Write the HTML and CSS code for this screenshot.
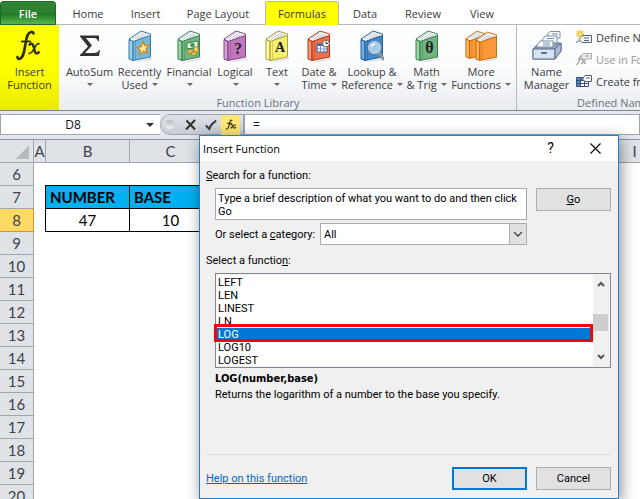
FILE: index.html
```
<!DOCTYPE html>
<html lang="en">
<head>
<meta charset="utf-8">
<title>Spreadsheet</title>
<link rel="stylesheet" href="styles.css">
</head>
<body>
<svg class="defs" aria-hidden="true">
  <symbol id="book" viewBox="0 0 24 32">
    <path d="M3 30.500 L8 31.500 L24 28 V29.500 L10 32Z" fill="#999" opacity=".35"/>
    <path d="M1 9 L13 1 L22.500 4 V7 L6 12Z" fill="#fff" stroke="currentColor" stroke-width="1"/>
    <path d="M4 8.500 L14 2 M6 9.500 L16 3 M9 9.500 L18 4 M12 8.500 L20 5" stroke="#b5bdc9" stroke-width=".8"/>
    <path d="M1 9.500 L5 11.500 V30.500 L1 29Z" class="book-spine" stroke="currentColor"/>
    <path d="M5 11.500 L22.500 5.500 V27 L5 30.500Z" class="book-cover" stroke="currentColor"/>
    <path d="M7.500 11 V30" fill="none" stroke="currentColor" opacity=".5" stroke-width=".8"/>
  </symbol>
</svg>
<div class="app">
  <nav class="tabs">
    <button class="tab tab-file">File</button>
    <button class="tab tab-home">Home</button>
    <button class="tab tab-insert">Insert</button>
    <button class="tab tab-page">Page Layout</button>
    <button class="tab tab-active">Formulas</button>
    <button class="tab tab-data">Data</button>
    <button class="tab tab-review">Review</button>
    <button class="tab tab-view">View</button>
  </nav>

  <div class="ribbon">
    <section class="group library">
      <div class="tools">
        <button class="tool insert-fn">
          <svg class="icon" viewBox="0 0 32 32"><path d="M19.500 3.500 Q19 1.500 17 2 C12.500 3 12.500 9 11.300 15 C10 22 9.500 28 5.500 29 Q3.500 29.200 3.500 27" fill="none" stroke="#2d2d10" stroke-width="2.600" stroke-linecap="round"/><path d="M7 11.500 H17" stroke="#2d2d10" stroke-width="1.800"/><path d="M15 15.500 Q18 11.500 19.500 16 L21 22 Q22.500 25 25.500 21.500" fill="none" stroke="#2d2d10" stroke-width="2.500"/><path d="M25.500 14 Q23 12.500 20.500 18 Q17.500 24 14.500 23.500" fill="none" stroke="#2d2d10" stroke-width="1.600"/></svg>
          <span>Insert<br>Function</span>
        </button>
        <button class="tool w-autosum">
          <svg class="icon" viewBox="0 0 32 32"><path d="M6 5.500 H25 V11 H24 Q23 8 20 8 H12 L18 15.500 L11 23 H20 Q24 23 25 20 H26 L25 26 H6 V25 L14 16.500 L6 6.500Z" fill="#333"/></svg>
          <span>AutoSum<br><i class="caret"></i></span>
        </button>
        <button class="tool w-recent">
          <svg class="icon book blue" viewBox="0 0 24 32"><use href="#book"/><path d="M15 11 L16.800 15.600 L21 15.200 L18 18.800 L19.500 23 L15.500 21.300 L11.500 25 L12.300 20.200 L9 17.500 L13.300 16.700Z" fill="#ffe8a0" stroke="#d88713" stroke-width="1.300"/></svg>
          <span>Recently<br>Used <i class="caret"></i></span>
        </button>
        <button class="tool w-financial">
          <svg class="icon book green" viewBox="0 0 24 32"><use href="#book"/><path d="M10 13 L21 11 V17 L10 19Z" fill="#edf8e8" stroke="#2d7c3c"/><ellipse cx="15.500" cy="15" rx="2.500" ry="2" fill="#3d9550"/><path d="M11 20 h5 v3 h-5Z M17 17 h4 v5 h-4Z M14 22 h5 v3 h-5Z" fill="#f9d65b" stroke="#a8771d" stroke-width=".7"/></svg>
          <span>Financial<br><i class="caret"></i></span>
        </button>
        <button class="tool w-logical">
          <svg class="icon book purple" viewBox="0 0 24 32"><use href="#book"/><text x="15" y="24" class="glyph">?</text></svg>
          <span>Logical<br><i class="caret"></i></span>
        </button>
        <button class="tool w-logical">
          <svg class="icon book yellow" viewBox="0 0 24 32"><use href="#book"/><text x="15" y="22" class="glyph glyph-small">A</text></svg>
          <span>Text<br><i class="caret"></i></span>
        </button>
        <button class="tool w-logical">
          <svg class="icon book red" viewBox="0 0 24 32"><use href="#book"/><path d="M10 14 H20 V22 H10Z" fill="#fff" stroke="#3d5f9d"/><path d="M10 15 H20" stroke="#3d6fb8" stroke-width="2"/><path d="M10 19 H20 M13.500 15 V22 M17 15 V22" stroke="#5c82bd" stroke-width=".8"/><circle cx="19" cy="13.500" r="3.300" fill="#fff" stroke="#555" stroke-width=".8"/><path d="M19 11.500 V13.500 H21" fill="none" stroke="#222"/></svg>
          <span>Date &amp;<br>Time <i class="caret"></i></span>
        </button>
        <button class="tool w-lookup">
          <svg class="icon book navy" viewBox="0 0 24 32"><use href="#book"/><path d="M18 22 L23.500 29" stroke="#8c93a0" stroke-width="3" stroke-linecap="round"/><circle cx="14.500" cy="17.500" r="5.500" fill="#9fcbee" stroke="#c5cbd6" stroke-width="2"/><path d="M11.500 17 Q12 14 15 14" fill="none" stroke="#fff" stroke-width="1.300"/></svg>
          <span>Lookup &amp;<br>Reference <i class="caret"></i></span>
        </button>
        <button class="tool w-math">
          <svg class="icon book green" viewBox="0 0 24 32"><use href="#book"/><text x="14.500" y="23" class="glyph">θ</text></svg>
          <span>Math<br>&amp; Trig <i class="caret"></i></span>
        </button>
        <button class="tool w-lookup">
          <svg class="icon orange" viewBox="0 0 32 32"><use href="#book" x="0" y="0" width="22" height="30"/><use href="#book" x="10" y="1" width="23" height="31"/></svg>
          <span>More<br>Functions <i class="caret"></i></span>
        </button>
      </div>
      <h2 class="group-title">Function Library</h2>
    </section>
    <section class="group names">
      <div class="tools">
        <button class="tool name-manager">
          <svg class="icon" viewBox="0 0 32 32"><path d="M2 19 L8 13 H30 V21 L24 29 H2Z" fill="#8da3c2" stroke="#5d6f8d"/><g fill="#f5f8fc" stroke="#8190a8"><path d="M19 1.500 H29 V8 H19 L16 5Z"/><path d="M14 6 H26 V13 H14 L11 10Z"/></g><path d="M5 17 L9 11 H22 V17 H8Z" fill="#fff" stroke="#7d8da5"/><path d="M12 13 H19 M12 15 H19 M21 4 H27 M16 8.500 H23" stroke="#7990ad"/><path d="M2 19 H24 V29 H2Z" fill="#d7e2f1" stroke="#5d6f8d"/><path d="M24 19 L30 13 V21 L24 29Z" fill="#a9bad3" stroke="#5d6f8d"/><path d="M10 23 H16" stroke="#5d6f8d" stroke-width="2"/></svg>
          <span>Name<br>Manager</span>
        </button>
        <div class="name-tools">
          <button class="row-tool"><svg class="icon-small" viewBox="0 0 16 14"><path d="M6 5.500 H15.500 V12.500 H6 L3 9.500Z" fill="#f5f8fc" stroke="#52647f"/><path d="M8 8 H13 M8 10.500 H13 M0 12.500 L3 10.500" stroke="#52647f"/><path d="M4 0 V8 M0 4 H8 M1 1 L7 7 M7 1 L1 7" stroke="#efbd2c" stroke-width="1.400"/><circle cx="4" cy="4" r="1.500" fill="#fff59b"/></svg>Define Name</button>
          <button class="row-tool off"><svg class="icon-small" viewBox="0 0 16 14"><path d="M7 1.500 H15.500 V7 H7 L5 4.500Z" fill="#eee" stroke="#aaa"/><path d="M9 4 H13 M6 4 Q4 3 3.500 7 Q3 12 0 12.500 M1.500 7 H6 M5 8 Q7 7 8 10 Q8.500 12 10 11 M9.500 8 L5 12" fill="none" stroke="#999" stroke-width="1.200"/></svg>Use in Formula</button>
          <button class="row-tool"><svg class="icon-small" viewBox="0 0 16 14"><path d="M.5 3.500 H12.500 V12.500 H.5Z" fill="#fff" stroke="#35517d"/><path d="M1 4 H12 V6.500 H1Z M1 6.500 H4.500 V12 H1Z" fill="#6587bb"/><path d="M.5 6.500 H12.500 M.5 9.500 H12.500 M4.500 3.500 V12.500 M8.500 3.500 V12.500" stroke="#35517d"/><path d="M9 1.500 H15.500 V7.500 H9 L6.500 5Z" fill="#fff" stroke="#4c5e79"/><path d="M10 4 H14" stroke="#4c5e79"/></svg>Create from Selection</button>
        </div>
      </div>
      <h2 class="group-title">Defined Names</h2>
    </section>
  </div>

  <div class="formula-bar">
    <label class="name-box"><input class="name-input" aria-label="Name box" value="D8"><i class="caret dark"></i></label>
    <div class="fx-buttons">
      <span class="grip"></span>
      <button class="fx-button" aria-label="Cancel entry"><svg viewBox="0 0 12 12"><path d="M1.500 1.500 L10 10.500 M10 1 L1 10.500" stroke="#333" stroke-width="2"/></svg></button>
      <button class="fx-button" aria-label="Enter"><svg viewBox="0 0 14 12"><path d="M1 6.500 L5 10.500 Q7 5 13 1" fill="none" stroke="#333a44" stroke-width="2.400"/></svg></button>
      <button class="fx-button fx-on" aria-label="Insert function"><svg viewBox="0 0 14 14"><path d="M8.500 2 Q6 0 5.300 5 Q4.500 11.500 1 12 M2.500 5 H8 M6.500 7 Q9 5.500 9.500 9 Q10.500 12 13 9.500 M12.500 6.500 Q10 7 6.500 11" fill="none" stroke="#3c3a22" stroke-width="1.500"/></svg></button>
    </div>
    <input class="formula-input" aria-label="Formula" value="=">
  </div>

  <main class="sheet">
    <table class="grid">
      <colgroup><col class="c-head"><col class="c-a"><col class="c-b"><col class="c-c"><col class="c-mid"><col class="c-mid"><col class="c-mid"><col class="c-mid"><col class="c-mid"><col class="c-b"></colgroup>
      <thead><tr><th class="corner"><i></i></th><th>A</th><th>B</th><th>C</th><th></th><th></th><th></th><th></th><th></th><th>I</th></tr></thead>
      <tbody>
        <tr><th>6</th></tr>
        <tr><th>7</th><td></td><td class="cell head first">NUMBER</td><td class="cell head">BASE</td></tr>
        <tr><th class="current">8</th><td></td><td class="cell first">47</td><td class="cell">10</td></tr>
        <tr><th>9</th></tr>
        <tr><th>10</th></tr>
        <tr><th>11</th></tr>
        <tr><th>12</th></tr>
        <tr><th>13</th></tr>
        <tr><th>14</th></tr>
        <tr><th>15</th></tr>
        <tr><th>16</th></tr>
        <tr><th>17</th></tr>
        <tr><th>18</th></tr>
        <tr><th>19</th></tr>
        <tr><th>20</th></tr>
      </tbody>
    </table>
  </main>

  <div class="dialog" role="dialog" aria-labelledby="dialog-title">
    <header class="dialog-bar">
      <h1 id="dialog-title" class="dialog-title">Insert Function</h1>
      <button class="bar-button">?</button>
      <button class="bar-button" aria-label="Close"><svg class="close-icon" viewBox="0 0 11 11"><path d="M.5 .5 L10.500 10.500 M10.500 .5 L.5 10.500" stroke="#000" stroke-width="1.100"/></svg></button>
    </header>
    <div class="dialog-body">
      <label class="caption" for="search"><u>S</u>earch for a function:</label>
      <div class="search-row">
        <textarea id="search" class="search">Type a brief description of what you want to do and then click Go</textarea>
        <button class="button"><u>G</u>o</button>
      </div>
      <div class="category-row">
        <label for="category">Or select a <u>c</u>ategory:</label>
        <div class="combo">
          <select id="category" class="combo-select"><option>All</option></select>
          <span class="combo-arrow"><svg viewBox="0 0 10 6"><path d="M1 1 L5 5 L9 1" fill="none" stroke="#444" stroke-width="1.300"/></svg></span>
        </div>
      </div>
      <label class="caption caption-list" for="functions">Select a functio<u>n</u>:</label>
      <div class="list">
        <select id="functions" class="list-select" size="7">
          <option>LEFT</option><option>LEN</option><option>LINEST</option><option>LN</option><option selected>LOG</option><option>LOG10</option><option>LOGEST</option>
        </select>
        <div class="scrollbar">
          <svg class="scroll-arrow" viewBox="0 0 8 6"><path d="M1 5 L4 2 L7 5" fill="none" stroke="#555" stroke-width="2"/></svg>
          <span class="thumb"></span>
          <svg class="scroll-arrow" viewBox="0 0 8 6"><path d="M1 1 L4 4 L7 1" fill="none" stroke="#555" stroke-width="2"/></svg>
        </div>
        <span class="marker"></span>
      </div>
      <div class="description">
        <strong>LOG(number,base)</strong>
        <p>Returns the logarithm of a number to the base you specify.</p>
      </div>
      <footer class="dialog-footer">
        <a class="help" href="#">Help on this function</a>
        <button class="button primary">OK</button>
        <button class="button">Cancel</button>
      </footer>
    </div>
  </div>
</div>
</body>
</html>
```
FILE: styles.css
```
* { box-sizing: border-box; }
body { margin: 0; overflow: hidden; font: 11px/13px "Open Sans", "Noto Sans", sans-serif; color: #3b3b3b; background: #fff; }
button { margin: 0; padding: 0; border: 0; background: none; font: inherit; color: inherit; white-space: nowrap; }
h1, h2, p { margin: 0; font-weight: 400; }
.defs { position: absolute; width: 0; height: 0; }
.app { position: relative; height: 100vh; display: flex; flex-direction: column; overflow: hidden; }

.tabs { display: flex; flex: none; height: 25px; padding-top: 1px; border-bottom: 1px solid #b4b9c1; }
.tab { height: 24px; }
.tab-file { width: 56px; color: #fff; font-weight: 600; border: 1px solid #1b6b2b; border-radius: 3px 3px 0 0; background: linear-gradient(#31842f, #2b8030 50%, #1d7526 51%, #56b848); }
.tab-home { width: 64px; }
.tab-insert { width: 51px; }
.tab-page { width: 94px; }
.tab-active { width: 74px; border: 1px solid #b4b9c1; border-bottom: 0; border-radius: 3px 3px 0 0; background: #ff0; }
.tab-data { width: 52px; }
.tab-review { width: 64px; }
.tab-view { width: 54px; }

.ribbon { display: flex; flex: none; height: 86px; background: linear-gradient(#fff, #fbfcfd 50%, #e9ecf0); border-bottom: 1px solid #83878d; }
.group { display: flex; flex-direction: column; flex: none; }
.library { width: 517px; border-right: 1px solid #b4b9c1; }
.names { flex: 1; min-width: 0; overflow: hidden; }
.tools { display: flex; height: 71px; }
.tool { display: flex; flex: none; flex-direction: column; align-items: center; gap: 3px; padding-top: 5px; text-align: center; }
.icon { width: 32px; height: 32px; flex: none; }
.book { width: 24px; }
.insert-fn { width: 59px; height: 85px; margin-right: 5px; background: linear-gradient(#ff0 50%, #eaea00); }
.w-autosum { width: 51px; }
.w-recent { width: 49px; }
.w-financial { width: 50px; }
.w-logical { width: 42px; }
.w-lookup { width: 64px; }
.w-math { width: 45px; }
.caret { display: inline-block; margin-left: 1px; border: 3px solid transparent; border-top-color: #666; border-bottom: 0; vertical-align: 3px; }
.caret.dark { border-width: 4px 4px 0; border-top-color: #333; }
.group-title { font-size: 11px; line-height: 13px; color: #6b7180; text-align: center; }
.names .group-title { padding-left: 60px; text-align: left; white-space: nowrap; }
.name-manager { width: 59px; }
.name-tools { display: flex; flex-direction: column; gap: 6px; padding-top: 4px; }
.row-tool { display: flex; align-items: center; gap: 4px; height: 16px; }
.icon-small { width: 16px; height: 14px; flex: none; }
.off { color: #999; }
.glyph { font: bold 16px "Liberation Serif", serif; text-anchor: middle; fill: #222; }
.glyph-small { font-size: 14px; }
.blue { color: #3478a6; --spine: #a4d1eb; --cover: #75b9df; }
.green { color: #37804c; --spine: #9fd4aa; --cover: #72b481; }
.purple { color: #80427f; --spine: #d7a0d5; --cover: #c176bd; }
.yellow { color: #aaa02b; --spine: #fffbb0; --cover: #f5ef73; }
.red { color: #b43511; --spine: #f59b7c; --cover: #e9714b; }
.navy { color: #245f9c; --spine: #76afe0; --cover: #4389ca; }
.orange { color: #c36500; --spine: #ffb264; --cover: #fb993a; }
.book-spine { fill: var(--spine); }
.book-cover { fill: var(--cover); }

.formula-bar { display: flex; flex: none; height: 29px; padding: 3px 0 4px; background: #e4e8ee; border-bottom: 1px solid #8e949c; }
.name-box { display: flex; align-items: center; width: 160px; padding-right: 6px; background: #fff; border: 1px solid #a0a5ad; border-right: 0; }
.name-input { flex: 1; min-width: 0; padding: 0; border: 0; font: inherit; font-size: 12px; color: #111; text-align: center; outline: 0; }
.fx-buttons { display: flex; align-items: center; width: 84px; background: linear-gradient(#dfe2e7, #c9cdd3); border: 1px solid #a0a5ad; border-radius: 11px 0 0 11px; }
.grip { width: 9px; height: 9px; margin: 0 7px 0 4px; border-radius: 50%; background: linear-gradient(#b6bac0, #f3f4f6); }
.fx-button { display: flex; align-items: center; justify-content: center; width: 20px; height: 20px; }
.fx-button svg { width: 12px; height: 12px; }
.fx-on { width: 19px; background: #ffe575; }
.formula-input { flex: 1; min-width: 0; padding: 0 8px; border: 1px solid #a0a5ad; font: inherit; font-size: 12px; color: #111; outline: 0; }

.sheet { flex: 1; min-height: 0; overflow: hidden; }
.grid { width: 677px; table-layout: fixed; border-collapse: separate; border-spacing: 0; font: 15px/20px Lato, sans-serif; color: #000; }
.c-head { width: 34px; }
.c-a { width: 12px; }
.c-b { width: 84px; }
.c-c { width: 82px; }
.grid th { height: 23px; padding: 0; font-weight: 400; color: #3d434b; background: #dfe3e8; border: solid #a0a7b0; border-width: 0 1px 1px 0; }
.grid td { height: 23px; padding: 0; }
.grid .corner { vertical-align: bottom; }
.corner i { display: block; width: 14px; height: 14px; margin: 0 4px 3px auto; background: linear-gradient(135deg, transparent 50%, #b5bac1 50%); }
.grid .current { background: #ffd966; border-color: #cf9534; }
.grid .cell { border: solid #000; border-width: 0 1px 1px 0; text-align: center; }
.grid .first { box-shadow: -1px 0 #000; }
.grid .head { padding-left: 4px; text-align: left; font-weight: 700; background: #00b0f0; box-shadow: 0 -1px #000; }
.grid .head.first { box-shadow: -1px 0 #000, 0 -1px #000, -1px -1px #000; }

.dialog { position: absolute; left: 199px; top: 135px; width: 420px; border: 1px solid #1883d7; background: #f0f0f0; box-shadow: 2px 4px 14px rgba(0, 0, 0, .45); font: 11px/13px Roboto, sans-serif; color: #000; }
.dialog-bar { display: flex; align-items: center; height: 25px; padding-left: 3px; background: #fff; }
.dialog-title { flex: 1; font: 11px/16px "Open Sans", sans-serif; }
.bar-button { display: flex; align-items: center; justify-content: center; width: 45px; height: 25px; font-size: 14px; }
.close-icon { width: 11px; height: 11px; }
.dialog-body { display: flex; flex-direction: column; padding: 8px 7px 8px 6px; }
.caption { height: 19px; line-height: 13px; }
.search-row { display: flex; align-items: flex-start; gap: 9px; padding-left: 9px; }
.search { flex: 1; height: 32px; padding: 3px 2px; border: 1px solid #a5a9b2; background: #fff; font: inherit; color: #000; resize: none; overflow: hidden; outline: 0; }
.button { width: 75px; height: 23px; border: 1px solid #adadad; background: #e1e1e1; }
.category-row { display: flex; align-items: center; gap: 5px; margin: 3px 84px 0 9px; }
.category-row label { width: 100px; white-space: nowrap; }
.combo { position: relative; flex: 1; height: 22px; }
.combo-select { width: 100%; height: 22px; padding: 0 3px; border: 1px solid #adadad; border-radius: 0; background: #fff; font: inherit; color: #000; appearance: none; }
.combo-arrow { position: absolute; top: 0; right: 0; display: flex; align-items: center; justify-content: center; width: 18px; height: 22px; border: 1px solid #adadad; background: #e1e1e1; pointer-events: none; }
.combo-arrow svg { width: 10px; height: 6px; }
.caption-list { margin-top: 9px; }
.list { position: relative; display: flex; height: 95px; margin-left: 9px; padding: 1px 2px 1px 0; border: 1px solid #828790; background: #f0f0f0; }
.list-select { flex: 1; padding: 1px 0 0; border: 0; background: #fff; font: inherit; color: #000; overflow: hidden; outline: 0; scrollbar-width: none; }
.list-select option { height: 13px; min-height: 0; padding: 0 2px; line-height: 13px; }
.list-select option:checked { color: #fff; -webkit-text-fill-color: #fff; background: linear-gradient(#0078d7, #0078d7); }
.marker { position: absolute; left: -2px; right: 17px; top: 50px; height: 18px; border: 3px solid #f00; pointer-events: none; }
.scrollbar { display: flex; flex-direction: column; align-items: center; width: 15px; padding: 6px 0; }
.scroll-arrow { width: 8px; height: 6px; }
.thumb { width: 15px; height: 17px; margin: 27px 0 auto; background: #cdcdcd; }
.description { height: 87px; padding: 4px 9px 0; border-bottom: 1px solid #dcdcdc; }
.description strong { font-family: "DejaVu Sans Condensed", "Noto Sans", sans-serif; }
.description p { margin-top: 3px; }
.dialog-footer { display: flex; align-items: center; gap: 9px; padding-top: 12px; }
.help { margin-right: auto; color: #0066cc; }
.primary { border: 2px solid #0078d7; }
```
